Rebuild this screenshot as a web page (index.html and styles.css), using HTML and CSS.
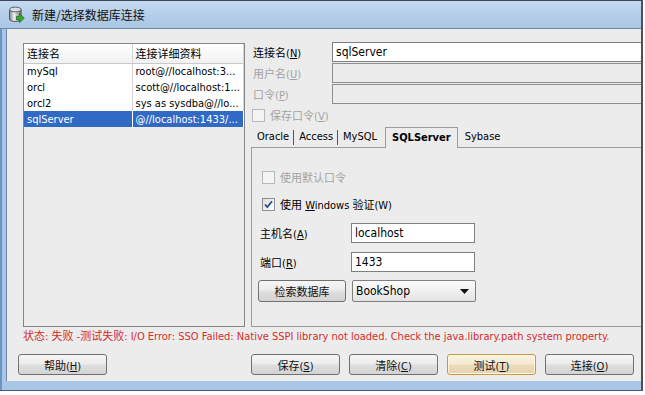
FILE: index.html
```html
<!DOCTYPE html>
<html lang="zh-CN">
<head>
    <meta charset="UTF-8">
    <title>新建/选择数据库连接</title>
    <link rel="stylesheet" href="styles.css">
</head>
<body>
<div class="window">
    <div class="titlebar">
        <svg class="app-icon" width="17" height="17" viewBox="0 0 17 17">
            <defs>
                <linearGradient id="cyl" x1="0" x2="1" y1="0" y2="0">
                    <stop offset="0" stop-color="#7d838a"/>
                    <stop offset="0.4" stop-color="#eef0f2"/>
                    <stop offset="1" stop-color="#6f757c"/>
                </linearGradient>
            </defs>
            <path d="M1.5 3.5v9.5c0 1.4 2.6 2.5 5.8 2.5s5.8-1.1 5.8-2.5V3.5" fill="url(#cyl)" stroke="#4a4f55" stroke-width="0.9"/>
            <ellipse cx="7.3" cy="3.5" rx="5.8" ry="2.4" fill="#d9dcdf" stroke="#4a4f55" stroke-width="0.9"/>
            <path d="M8.5 10.5h3v-3l4.8 4.6-4.8 4.6v-3h-3z" fill="#38a834" stroke="#1d6a1b" stroke-width="0.7"/>
        </svg>
        <span class="title">新建/选择数据库连接</span>
    </div>
    <div class="frame">
        <div class="client">
            <div class="main">
                <div class="conn-list">
                    <table>
                        <thead>
                            <tr><th class="col-name">连接名</th><th>连接详细资料</th></tr>
                        </thead>
                        <tbody>
                            <tr><td>mySql</td><td>root@//localhost:3...</td></tr>
                            <tr><td>orcl</td><td>scott@//localhost:1...</td></tr>
                            <tr><td>orcl2</td><td>sys as sysdba@//lo...</td></tr>
                            <tr class="selected"><td>sqlServer</td><td>@//localhost:1433/...</td></tr>
                        </tbody>
                    </table>
                </div>

                <div class="details">
                    <div class="field-row">
                        <span class="label">连接名(<u>N</u>)</span>
                        <div class="textbox">sqlServer</div>
                    </div>
                    <div class="field-row disabled">
                        <span class="label">用户名(<u>U</u>)</span>
                        <div class="textbox"></div>
                    </div>
                    <div class="field-row disabled">
                        <span class="label">口令(<u>P</u>)</span>
                        <div class="textbox"></div>
                    </div>
                    <div class="check-row save-pw disabled">
                        <span class="box"></span>
                        <span>保存口令(<u>V</u>)</span>
                    </div>

                    <div class="tabs">
                        <span class="tab sep">Oracle</span>
                        <span class="tab sep">Access</span>
                        <span class="tab">MySQL</span>
                        <span class="tab active">SQLServer</span>
                        <span class="tab">Sybase</span>
                    </div>
                    <div class="tab-panel">
                        <div class="check-row disabled">
                            <span class="box"></span>
                            <span>使用默认口令</span>
                        </div>
                        <div class="check-row">
                            <span class="box checked">
                                <svg width="11" height="11" viewBox="0 0 11 11"><path d="M2 5.5l2.3 2.6L9 2.3" fill="none" stroke="#2a4f8e" stroke-width="1.8"/></svg>
                            </span>
                            <span>使用 <u>W</u>indows 验证(W)</span>
                        </div>
                        <div class="panel-row">
                            <span class="label">主机名(<u>A</u>)</span>
                            <div class="textbox small">localhost</div>
                        </div>
                        <div class="panel-row">
                            <span class="label">端口(<u>R</u>)</span>
                            <div class="textbox small">1433</div>
                        </div>
                        <div class="panel-row buttons-row">
                            <button class="btn fetch">检索数据库</button>
                            <div class="combo">
                                <span>BookShop</span>
                                <svg width="9" height="5" viewBox="0 0 9 5"><path d="M0 0h9L4.5 5z" fill="#111"/></svg>
                            </div>
                        </div>
                    </div>
                </div>
            </div>

            <div class="status">状态: 失败 -测试失败: I/O Error: SSO Failed: Native SSPI library not loaded. Check the java.library.path system property.</div>

            <div class="actions">
                <button class="btn">帮助(<u>H</u>)</button>
                <span class="spacer"></span>
                <button class="btn">保存(<u>S</u>)</button>
                <button class="btn">清除(<u>C</u>)</button>
                <button class="btn focused">测试(<u>T</u>)</button>
                <button class="btn">连接(<u>O</u>)</button>
            </div>
        </div>
    </div>
</div>
</body>
</html>
```

FILE: styles.css
```css
* {
    box-sizing: border-box;
}

html, body {
    margin: 0;
}

body {
    width: 645px;
    height: 395px;
    overflow: hidden;
    background: #fff;
    font-family: "DejaVu Sans Condensed", "Noto Sans CJK SC", sans-serif;
    font-size: 11px;
    color: #000;
}

u {
    text-decoration: underline;
    text-underline-offset: 1px;
}

/* window frame */
.window {
    width: 643px;
    height: 391px;
    display: flex;
    flex-direction: column;
    border-right: 2px solid #4d5258;
    border-bottom: 1px solid #4a5a70;
    background: linear-gradient(90deg, #6f93c0 0, #6f93c0 2px, #aac6e6 2px);
}

.titlebar {
    height: 29px;
    display: flex;
    align-items: center;
    gap: 7px;
    padding-left: 8px;
    border-top: 1px solid #3c4656;
    border-bottom: 1px solid #6f87a6;
    background: linear-gradient(#c4daf0, #b2cce8 60%, #aac6e4);
}

.title {
    font-family: "Noto Sans CJK SC", sans-serif;
    font-size: 12px;
    color: #111;
}

.frame {
    flex: 1;
    display: flex;
    padding: 0 0 9px 6px;
}

.client {
    flex: 1;
    display: flex;
    flex-direction: column;
    background: #ececec;
    border-left: 1px solid #6e86a6;
}

/* main area */
.main {
    display: flex;
    gap: 6px;
    height: 298px;
    padding: 13px 0 0 16px;
}

.conn-list {
    width: 222px;
    margin-top: 1px;
    border: 1px solid #858585;
    background: #ececec;
}

table {
    width: 100%;
    border-collapse: collapse;
}

th, td {
    padding: 0 3px;
    text-align: left;
    font-weight: normal;
    white-space: nowrap;
    overflow: hidden;
}

th {
    height: 19px;
    background: linear-gradient(#ffffff, #f1f1f1);
    border-bottom: 1px solid #c9c9c9;
    border-right: 1px solid #d5d5d5;
}

th.col-name {
    width: 110px;
}

td {
    height: 16px;
    background: #fff;
    border-right: 1px solid #d5d5d5;
}

tr.selected td {
    background: #316ac5;
    color: #fff;
    border-right-color: #fff;
}

.details {
    flex: 1;
    display: flex;
    flex-direction: column;
}

.field-row {
    display: grid;
    grid-template-columns: 81px 1fr;
    align-items: center;
    height: 20px;
    margin-bottom: 1px;
}

.label {
    padding-left: 2px;
}

.textbox {
    height: 20px;
    padding: 2px 3px;
    background: #fff;
    border: 1px solid #7f7f7f;
    border-right: none;
    line-height: 14px;
    font-size: 12px;
}

.disabled {
    color: #a3a3a3;
}

.disabled .textbox {
    background: #ececec;
    border-color: #8e8e8e;
}

.check-row {
    display: flex;
    align-items: center;
    gap: 5px;
    height: 18px;
}

.save-pw {
    margin-top: 1px;
    padding-left: 1px;
}

.box {
    width: 13px;
    height: 13px;
    display: flex;
    align-items: center;
    justify-content: center;
    border: 1px solid #8e8f8f;
    background: linear-gradient(135deg, #dcdcdc, #ffffff);
}

.disabled .box {
    border-color: #b8b8b8;
    background: #f4f4f4;
}

/* tabs */
.tabs {
    display: flex;
    align-items: flex-end;
    height: 22px;
    padding-left: 1px;
    margin-top: 1px;
}

.tab {
    height: 20px;
    padding: 0 5px;
    line-height: 20px;
    font-size: 11px;
}

.tab.sep {
    position: relative;
}

.tab.sep::after {
    content: "";
    position: absolute;
    right: 0;
    top: 3px;
    height: 15px;
    border-right: 1px solid #555;
}

.tab.active {
    height: 21px;
    margin: 0 2px 0 3px;
    padding: 0 6px;
    font-weight: bold;
    background: #ececec;
    border: 1px solid #9c9c9c;
    border-bottom: none;
    position: relative;
    top: 1px;
}

.tab-panel {
    flex: 1;
    padding: 20px 0 0 6px;
    border: 1px solid #9c9c9c;
    border-right: none;
}

.tab-panel .check-row {
    margin-left: 4px;
    margin-bottom: 9px;
}

.panel-row {
    display: grid;
    grid-template-columns: 93px 124px;
    align-items: center;
    height: 21px;
    margin-bottom: 8px;
}

.textbox.small {
    border-right: 1px solid #7f7f7f;
}

.buttons-row {
    grid-template-columns: 88px 124px;
    column-gap: 6px;
    height: 22px;
}

/* buttons */
.btn {
    height: 21px;
    padding: 0;
    font-family: "DejaVu Sans Condensed", "Noto Sans CJK SC", sans-serif;
    font-size: 11px;
    color: #111;
    border: 1px solid #707070;
    border-radius: 3px;
    background: linear-gradient(#f6f6f6, #ececec 45%, #dedede 55%, #d3d3d3);
}

.btn.fetch {
    height: 22px;
}

.btn.focused {
    border-color: #c8974a;
    background: linear-gradient(#fbf4e4, #f5ead2 45%, #ecdcbc 55%, #e6d3ae);
    box-shadow: inset 0 0 0 1px #fff6de;
}

.combo {
    height: 22px;
    display: flex;
    align-items: center;
    justify-content: space-between;
    padding: 0 6px 0 3px;
    font-size: 12px;
    border: 1px solid #7f7f7f;
    border-radius: 2px;
    background: linear-gradient(#fbfbfb, #f0f0f0 50%, #e2e2e2);
}

/* status + actions */
.status {
    height: 27px;
    padding: 3px 0 0 16px;
    line-height: 14px;
    color: #d42d2d;
}

.actions {
    display: flex;
    gap: 9px;
    padding: 0 7px 0 11px;
}

.actions .btn {
    width: 89px;
}

.spacer {
    flex: 1;
}
```
